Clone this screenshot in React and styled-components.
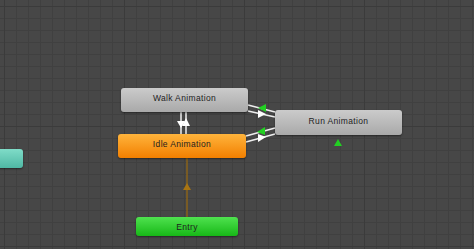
import React from "react";
import styled, { createGlobalStyle } from "styled-components";

const Global = createGlobalStyle`
  html, body { margin: 0; padding: 0; background: #474747; }
  #root { width: 474px; height: 249px; }
`;

const nodes = [
  { id: "walk", label: "Walk Animation", x: 121, y: 88, w: 127, h: 24, kind: "gray" },
  { id: "idle", label: "Idle Animation", x: 118, y: 134, w: 128, h: 24, kind: "orange" },
  { id: "run", label: "Run Animation", x: 275, y: 110, w: 127, h: 25, kind: "gray" },
  { id: "entry", label: "Entry", x: 136, y: 217, w: 102, h: 19, kind: "green" },
  { id: "any", label: "", x: -60, y: 149, w: 83, h: 19, kind: "teal" },
];

const fills = {
  gray: "linear-gradient(#cbcbcb, #a9a9a9)",
  orange: "linear-gradient(#ffb43c, #f27f00)",
  green: "linear-gradient(#4fe24f, #17b817)",
  teal: "linear-gradient(#7fdcc8, #4fb8a4)",
};

export default function App() {
  return (
    <>
      <Global />
      <Canvas>
        <Edges width="474" height="249">
          {/* walk <-> idle */}
          <line x1="181" y1="112" x2="181" y2="134" stroke="#f0f0f0" strokeWidth="1.5" />
          <line x1="186" y1="112" x2="186" y2="134" stroke="#f0f0f0" strokeWidth="1.5" />
          <polygon points="177,121 185,121 181,128" fill="#fff" />
          <polygon points="182,126 190,126 186,118" fill="#fff" />

          {/* walk <-> run */}
          <line x1="248" y1="105" x2="275" y2="112" stroke="#eee" strokeWidth="1.5" />
          <line x1="248" y1="111" x2="275" y2="117" stroke="#eee" strokeWidth="1.5" />
          <polygon points="258,108 266,104 266,112" fill="#22d022" />
          <polygon points="266,114 258,110 258,118" fill="#fff" />

          {/* idle <-> run */}
          <line x1="246" y1="136" x2="275" y2="128" stroke="#eee" strokeWidth="1.5" />
          <line x1="246" y1="142" x2="275" y2="134" stroke="#eee" strokeWidth="1.5" />
          <polygon points="257,132 265,127 265,135" fill="#22d022" />
          <polygon points="266,137 258,134 258,142" fill="#fff" />

          {/* entry -> idle */}
          <line x1="187" y1="158" x2="187" y2="217" stroke="#9a6a10" strokeWidth="1.2" />
          <polygon points="183,190 191,190 187,183" fill="#a87412" />

          {/* run marker */}
          <polygon points="334,146 342,146 338,139" fill="#22d022" />
        </Edges>

        {nodes.map((n) => (
          <Node
            key={n.id}
            $kind={n.kind}
            style={{ left: n.x, top: n.y, width: n.w, height: n.h }}
          >
            {n.label}
          </Node>
        ))}
      </Canvas>
    </>
  );
}

const Canvas = styled.div`
  position: relative;
  width: 474px;
  height: 249px;
  overflow: hidden;
  background-color: #474747;
  background-image:
    linear-gradient(to right, #3b3b3b 1px, transparent 1px),
    linear-gradient(to bottom, #3b3b3b 1px, transparent 1px),
    linear-gradient(to right, #404040 1px, transparent 1px),
    linear-gradient(to bottom, #404040 1px, transparent 1px);
  background-size: 120px 120px, 120px 120px, 12px 12px, 12px 12px;
  background-position: 4px 0, 0 6px, 4px 0, 0 6px;
`;

const Edges = styled.svg`
  position: absolute;
  left: 0;
  top: 0;
  z-index: 1;
`;

const Node = styled.div`
  position: absolute;
  z-index: 2;
  box-sizing: border-box;
  display: flex;
  align-items: center;
  justify-content: center;
  padding-bottom: ${({ $kind }) => ($kind === "green" ? "0" : "4px")};
  border-radius: 3px;
  background: ${({ $kind }) => fills[$kind]};
  box-shadow: 0 1px 2px rgba(0, 0, 0, 0.45);
  font-family: "Liberation Sans", Arial, sans-serif;
  font-size: 8.5px;
  letter-spacing: 0.35px;
  color: #1e1e1e;
`;
